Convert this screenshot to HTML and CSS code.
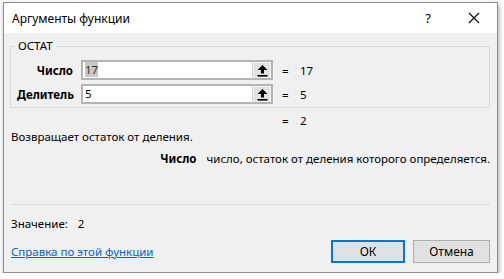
FILE: index.html
```html
<!DOCTYPE html>
<html lang="ru">
<head>
    <meta charset="UTF-8">
    <title>Аргументы функции</title>
    <link rel="stylesheet" href="styles.css">
</head>
<body>
    <div class="dialog">
        <div class="titlebar">
            <span class="title">Аргументы функции</span>
            <span class="title-btn help">?</span>
            <span class="title-btn close">
                <svg width="12" height="12" viewBox="0 0 12 12"><path d="M1 1L11 11M11 1L1 11" stroke="#000" stroke-width="1.1" fill="none"/></svg>
            </span>
        </div>
        <div class="content">
            <fieldset class="group">
                <legend>ОСТАТ</legend>
                <div class="arg-row">
                    <label class="arg-label">Число</label>
                    <div class="arg-input"><span class="sel">17</span></div>
                    <button class="ref-btn">
                        <svg width="13" height="13" viewBox="0 0 13 13"><path d="M6.5 1L1.5 6H5V9.5H8V6H11.5Z" fill="#000"/><rect x="1.5" y="11" width="10" height="1.6" fill="#000"/></svg>
                    </button>
                    <span class="eq">=</span>
                    <span class="eq-val">17</span>
                </div>
                <div class="arg-row">
                    <label class="arg-label">Делитель</label>
                    <div class="arg-input">5</div>
                    <button class="ref-btn">
                        <svg width="13" height="13" viewBox="0 0 13 13"><path d="M6.5 1L1.5 6H5V9.5H8V6H11.5Z" fill="#000"/><rect x="1.5" y="11" width="10" height="1.6" fill="#000"/></svg>
                    </button>
                    <span class="eq">=</span>
                    <span class="eq-val">5</span>
                </div>
            </fieldset>
            <div class="result-row">
                <span class="eq">=</span>
                <span class="eq-val">2</span>
            </div>
            <div class="desc">Возвращает остаток от деления.</div>
            <div class="arg-desc"><b>Число</b><span>число, остаток от деления которого определяется.</span></div>
            <div class="spacer"></div>
            <div class="separator"></div>
            <div class="value">Значение:<span>2</span></div>
            <div class="footer">
                <a href="#" class="help-link">Справка по этой функции</a>
                <button class="btn btn-ok">ОК</button>
                <button class="btn">Отмена</button>
            </div>
        </div>
    </div>
</body>
</html>
```

FILE: styles.css
```css
html, body {
    margin: 0;
    padding: 0;
    background-color: #ffffff;
    font-family: "Noto Sans", "Open Sans", sans-serif;
    font-size: 11.5px;
    color: #000;
}
.dialog {
    margin: 2px 0 0 3px;
    width: 493px;
    height: 269px;
    border: 1px solid #8c8c8c;
    background-color: #f0f0f0;
    box-shadow: 1px 2px 5px rgba(0,0,0,0.35);
    display: flex;
    flex-direction: column;
}
.titlebar {
    height: 30px;
    background-color: #ffffff;
    display: flex;
    align-items: center;
    padding-left: 8px;
}
.title {
    flex: 1;
    font-size: 12px;
}
.title-btn {
    width: 46px;
    height: 30px;
    display: flex;
    align-items: center;
    justify-content: center;
}
.help {
    font-size: 13px;
}
.content {
    flex: 1;
    display: flex;
    flex-direction: column;
    padding: 0 7px 9px 6px;
}
.group {
    margin: 6px 0 0 0;
    padding: 4px 6px 3px 6px;
    border: 1px solid #dcdcdc;
    min-width: 0;
}
.group legend {
    padding: 0 3px;
    margin-left: -2px;
    line-height: 14px;
}
.arg-row {
    display: flex;
    align-items: center;
    height: 20px;
    margin-top: 3px;
}
.arg-row + .arg-row {
    margin-top: 4px;
}
.arg-label {
    width: 56px;
    text-align: right;
    font-weight: bold;
    padding-right: 8px;
}
.arg-input {
    width: 167px;
    height: 16px;
    border: 2px solid #b4b4b4;
    border-right: none;
    background-color: #fff;
    line-height: 16px;
    padding-left: 2px;
}
.sel {
    background-color: #c8c8c8;
    color: #333;
}
.ref-btn {
    width: 21px;
    height: 20px;
    border: 2px solid #b4b4b4;
    border-left: 1px solid #d0d0d0;
    background-color: #e1e1e1;
    box-shadow: inset 0 0 0 1px #f4f4f4;
    padding: 0;
    display: flex;
    align-items: center;
    justify-content: center;
}
.eq {
    margin-left: 9px;
    width: 18px;
}
.result-row {
    display: flex;
    height: 14px;
    line-height: 14px;
    margin-top: 6px;
    padding-left: 263px;
}
.desc {
    margin-top: 2px;
    line-height: 14px;
    padding-left: 1px;
}
.arg-desc {
    margin-top: 8px;
    line-height: 14px;
    text-align: right;
}
.arg-desc span {
    margin-left: 10px;
}
.spacer {
    flex: 1;
}
.separator {
    border-top: 1px solid #dcdcdc;
    margin: 0 0 12px 1px;
}
.value {
    line-height: 14px;
    padding-left: 1px;
}
.value span {
    margin-left: 10px;
}
.footer {
    display: flex;
    align-items: center;
    margin-top: 9px;
    padding-left: 1px;
}
.help-link {
    flex: 1;
    color: #0066cc;
    text-decoration: underline;
}
.btn {
    width: 77px;
    height: 23px;
    border: 1px solid #adadad;
    background-color: #e1e1e1;
    font-family: inherit;
    font-size: 12px;
    margin-left: 8px;
    padding: 0;
}
.btn-ok {
    width: 74px;
    border: 2px solid #0078d7;
}
```
